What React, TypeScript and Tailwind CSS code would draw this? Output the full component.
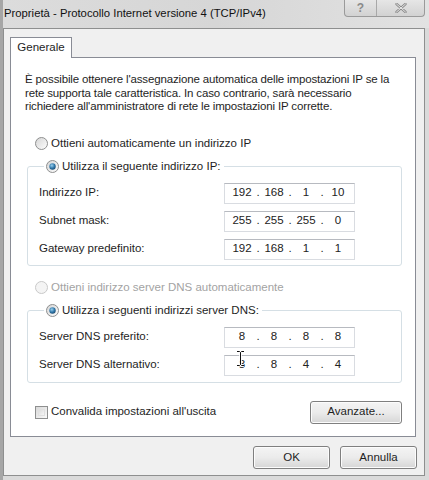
import React from 'react';

const font = "font-['Liberation_Sans',Arial,sans-serif]";

// radio button Win7 style
const Radio = ({ checked, disabled }: { checked?: boolean; disabled?: boolean }) => (
  <svg width="13" height="13" viewBox="0 0 13 13" className="shrink-0">
    <defs>
      <linearGradient id="rbg" x1="0" y1="0" x2="1" y2="1">
        <stop offset="0" stopColor="#d4d4d4" />
        <stop offset="1" stopColor="#ffffff" />
      </linearGradient>
      <radialGradient id="rdot" cx="0.4" cy="0.35" r="0.7">
        <stop offset="0" stopColor="#9ad0ef" />
        <stop offset="0.6" stopColor="#2f76a8" />
        <stop offset="1" stopColor="#1b4a6e" />
      </radialGradient>
    </defs>
    <circle cx="6.5" cy="6.5" r="6" fill={disabled ? '#f4f4f4' : 'url(#rbg)'} stroke={disabled ? '#c8c8c8' : '#8e8f8f'} strokeWidth="1" />
    {checked && <circle cx="6.5" cy="6.5" r="3.2" fill="url(#rdot)" />}
  </svg>
);

const Checkbox = () => (
  <span className="w-[13px] h-[13px] shrink-0 border border-[#8e8f8f] bg-gradient-to-br from-[#d8d8d8] to-[#fafafa] p-[2px]">
    <span className="block w-full h-full border border-[#e0e0e0] bg-gradient-to-br from-[#dcdcdc] to-[#f6f6f6]" />
  </span>
);

const IpBox = ({ parts, cursor }: { parts: string[]; cursor?: boolean }) => (
  <div className="relative w-[131px] h-[21px] bg-white border border-[#d9dce1] border-t-[#b7bac0] flex items-center pl-[5px] text-[#222]">
    {parts.map((p, i) => (
      <React.Fragment key={i}>
        <span className="w-[24px] text-center">{p}</span>
        {i < 3 && <span className="w-[8px] text-center">.</span>}
      </React.Fragment>
    ))}
    {cursor && (
      <svg width="9" height="17" viewBox="0 0 9 17" className="absolute left-[11px] top-[-6px]">
        <path d="M1 1.5h2.5l1 1 1-1H8M4.5 2.5v12M1 15.5h2.5l1-1 1 1H8" fill="none" stroke="#fff" strokeWidth="2.6" />
        <path d="M1 1.5h2.5l1 1 1-1H8M4.5 2.5v12M1 15.5h2.5l1-1 1 1H8" fill="none" stroke="#111" strokeWidth="1" />
      </svg>
    )}
  </div>
);

const Row = ({ label, parts, cursor }: { label: string; parts: string[]; cursor?: boolean }) => (
  <div className="flex items-center h-[21px]">
    <span className="w-[185px]">{label}</span>
    <IpBox parts={parts} cursor={cursor} />
  </div>
);

const WinButton = ({ children, className = '' }: { children: React.ReactNode; className?: string }) => (
  <button className={`h-[23px] rounded-[3px] border border-[#7f7f7f] bg-gradient-to-b from-[#f4f4f4] via-[#ebebeb] to-[#d6d6d6] text-[#1e1e1e] shadow-[inset_0_0_0_1px_#fcfcfc] ${className}`}>
    {children}
  </button>
);

export default function App() {
  return (
    <div className={`w-[429px] h-[480px] bg-[#dadada] border-l-[3px] border-l-[#a6a6a6] overflow-hidden text-[11.5px] text-[#1e1e1e] ${font}`}>
      {/* Titolo */}
      <div className="h-[28px] flex items-start bg-gradient-to-r from-[#dcdcdc] via-[#d6d6d6] to-[#e2e2e2]">
        <span className="pl-[1px] pt-[5px] text-[11.3px] text-[#111]">Proprietà - Protocollo Internet versione 4 (TCP/IPv4)</span>
        <div className="ml-auto mr-[4px] flex h-[17px] rounded-b-[4px] border border-t-0 border-[#9a9a9a] bg-gradient-to-b from-[#e6e6e6] to-[#d2d2d2] overflow-hidden">
          <div className="w-[32px] flex items-center justify-center border-r border-[#a8a8a8] text-[12px] font-bold text-[#8a8a8a]">?</div>
          <div className="w-[47px] flex items-center justify-center">
            <svg width="12" height="10" viewBox="0 0 12 10">
              <path d="M1.5 1l9 8M10.5 1l-9 8" stroke="#8a8a8a" strokeWidth="2.4" strokeLinecap="round" />
              <path d="M1.5 1l9 8M10.5 1l-9 8" stroke="#f2f2f2" strokeWidth="0.9" strokeLinecap="round" />
            </svg>
          </div>
        </div>
      </div>

      {/* Corpo */}
      <div className="ml-0 mr-[4px] h-[448px] border border-[#8e8f8f] bg-[#f0f0f0] pt-[8px] pl-[6px] flex flex-col">
        <div className="relative z-10 -mb-px w-[62px] h-[21px] bg-white border border-b-0 border-[#898c95] flex items-center justify-center">
          Generale
        </div>
        <div className="w-[406px] h-[380px] bg-white border border-[#898c95] pt-[15px] pl-[14px] flex flex-col">
          <p className="leading-[13.5px] tracking-[-0.15px]">
            È possibile ottenere l'assegnazione automatica delle impostazioni IP se la
            <br />
            rete supporta tale caratteristica. In caso contrario, sarà necessario
            <br />
            richiedere all'amministratore di rete le impostazioni IP corrette.
          </p>

          <div className="mt-[22px] h-[16px] pl-[10px] flex items-center gap-[3px]">
            <Radio />
            <span>Ottieni automaticamente un indirizzo IP</span>
          </div>

          <fieldset className="mt-[7px] ml-[2px] w-[375px] border border-[#d5dfe5] rounded-[3px] pl-[11px] pb-[5px]">
            <legend className="ml-[5px] pl-[2px] pr-[3px] h-[16px] flex items-center gap-[3px]">
              <Radio checked />
              <span>Utilizza il seguente indirizzo IP:</span>
            </legend>
            <div className="pt-[8px] flex flex-col gap-[7px]">
              <Row label="Indirizzo IP:" parts={['192', '168', '1', '10']} />
              <Row label="Subnet mask:" parts={['255', '255', '255', '0']} />
              <Row label="Gateway predefinito:" parts={['192', '168', '1', '1']} />
            </div>
          </fieldset>

          <div className="mt-[14px] h-[16px] pl-[10px] flex items-center gap-[3px] text-[#a3a3a3]">
            <Radio disabled />
            <span>Ottieni indirizzo server DNS automaticamente</span>
          </div>

          <fieldset className="mt-[7px] ml-[2px] w-[375px] border border-[#d5dfe5] rounded-[3px] pl-[11px] pb-[6px]">
            <legend className="ml-[5px] pl-[2px] pr-[3px] h-[16px] flex items-center gap-[3px]">
              <Radio checked />
              <span>Utilizza i seguenti indirizzi server DNS:</span>
            </legend>
            <div className="pt-[8px] flex flex-col gap-[7px]">
              <Row label="Server DNS preferito:" parts={['8', '8', '8', '8']} />
              <Row label="Server DNS alternativo:" parts={['8', '8', '4', '4']} cursor />
            </div>
          </fieldset>

          <div className="mt-[18px] pl-[10px] w-[377px] flex items-center justify-between">
            <div className="flex items-center gap-[3px]">
              <Checkbox />
              <span>Convalida impostazioni all'uscita</span>
            </div>
            <WinButton className="w-[92px]">Avanzate...</WinButton>
          </div>
        </div>

        <div className="mt-[9px] mr-[7px] flex justify-end gap-[10px]">
          <WinButton className="w-[77px] h-[22px]">OK</WinButton>
          <WinButton className="w-[77px] h-[22px]">Annulla</WinButton>
        </div>
      </div>
    </div>
  );
}
